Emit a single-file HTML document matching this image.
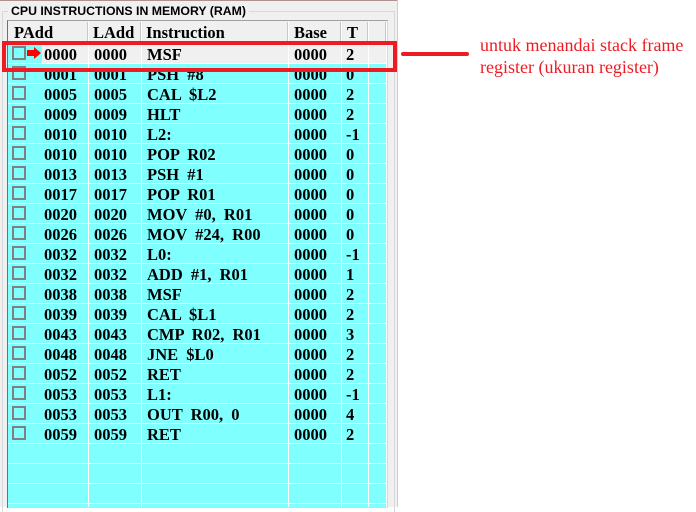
<!DOCTYPE html>
<html><head><style>
body{margin:0;width:696px;height:507px;background:#fff;position:relative;overflow:hidden;font-family:"Liberation Serif",serif}
.a{position:absolute}
.t{position:absolute;font-weight:bold;font-size:16.5px;line-height:20px;color:#000;white-space:nowrap;word-spacing:4px}
.cb{position:absolute;width:10px;height:10px;border:2px solid #808080;box-sizing:content-box}
</style></head><body>
<div class="a" style="left:0;top:0;width:397px;height:507px;background:#f0f0f0;border-right:1px solid #d0d0d0"></div>
<div class="a" style="left:0;top:0;width:397px;height:1px;background:#b09090"></div>
<div class="a" style="left:2px;top:11px;width:391px;height:500px;border:1px solid #d8d8d8;border-bottom:none"></div>
<div class="a" style="left:8px;top:2px;padding:0 3px;background:#f0f0f0;font:bold 12.3px 'Liberation Sans',sans-serif;line-height:18px;color:#000">CPU INSTRUCTIONS IN MEMORY (RAM)</div>
<div class="a" style="left:7px;top:20px;width:380px;height:487px;background:#80ffff;border-left:1px solid #707070;border-top:1px solid #a0a0a0"></div>
<div class="a" style="left:8px;top:21px;width:379px;height:22px;background:#f0f0f0"></div>
<div class="a" style="left:42px;top:43px;width:345px;height:21px;background:#f0f0f0"></div>
<div id="g"></div>
<div class="a" style="left:2px;top:41px;width:387px;height:23px;border:4px solid #ed1c24"></div>
<div class="a" style="left:401px;top:52px;width:68px;height:4px;background:#ed1c24;border-radius:2px"></div>
<div class="a" style="left:480px;top:34px;font-size:18px;line-height:22px;color:#ed1c24;white-space:nowrap">untuk menandai stack frame<br>register (ukuran register)</div>
<script>
var rows=[["0000","0000","MSF","0000","2"],["0001","0001","PSH #8","0000","0"],["0005","0005","CAL $L2","0000","2"],["0009","0009","HLT","0000","2"],["0010","0010","L2:","0000","-1"],["0010","0010","POP R02","0000","0"],["0013","0013","PSH #1","0000","0"],["0017","0017","POP R01","0000","0"],["0020","0020","MOV #0, R01","0000","0"],["0026","0026","MOV #24, R00","0000","0"],["0032","0032","L0:","0000","-1"],["0032","0032","ADD #1, R01","0000","1"],["0038","0038","MSF","0000","2"],["0039","0039","CAL $L1","0000","2"],["0043","0043","CMP R02, R01","0000","3"],["0048","0048","JNE $L0","0000","2"],["0052","0052","RET","0000","2"],["0053","0053","L1:","0000","-1"],["0053","0053","OUT R00, 0","0000","4"],["0059","0059","RET","0000","2"]];
var h='';
[88,141,288,341,368,386].forEach(function(x){h+='<div class="a" style="left:'+x+'px;top:21px;width:1px;height:486px;background:#fff"></div>';h+='<div class="a" style="left:'+(x-1)+'px;top:22px;width:1px;height:20px;background:#c8c8c8"></div>';});
for(var y=43;y<507;y+=20)h+='<div class="a" style="left:8px;top:'+y+'px;width:379px;height:1px;background:#fff"></div>';
h+='<div class="a" style="left:8px;top:42px;width:379px;height:1px;background:#a0a0a0"></div>';
var hx=[14,93,146,294,347];["PAdd","LAdd","Instruction","Base","T"].forEach(function(s,i){h+='<div class="t" style="left:'+hx[i]+'px;top:23px">'+s+'</div>';});
var cx=[44,94,147,294,346];
rows.forEach(function(r,i){var y=44+i*20;h+='<div class="cb" style="left:12px;top:'+(y+2)+'px"></div>';r.forEach(function(s,j){h+='<div class="t" style="left:'+cx[j]+'px;top:'+(y+1)+'px">'+s+'</div>';});});
h+='<svg class="a" style="left:27px;top:47px" width="15" height="12"><path d="M0 3H7V0L14 6L7 12V9H0Z" fill="#ff0000"/></svg>';
document.getElementById('g').innerHTML=h;
</script>
</body></html>
